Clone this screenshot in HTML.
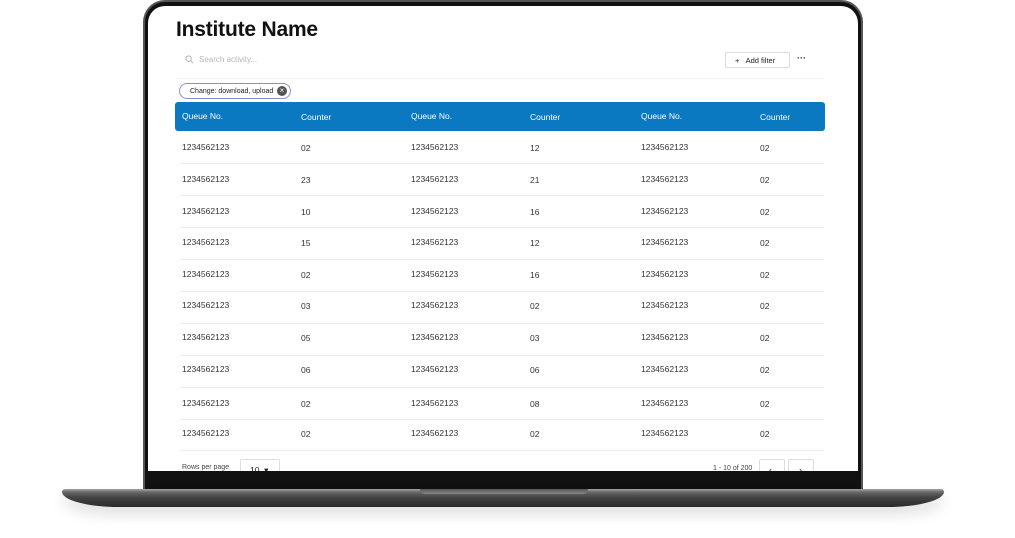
<!DOCTYPE html>
<html><head><meta charset="utf-8"><style>
*{margin:0;padding:0;box-sizing:border-box}
body{width:1015px;height:538px;background:#fff;position:relative;overflow:hidden;font-family:"Liberation Sans",sans-serif;color:#222}
.bezel{position:absolute;left:143px;top:0;width:720px;height:492px;background:#111;border-radius:22px 22px 0 0;border:2px solid #555;border-bottom:none}
.screen{position:absolute;left:148px;top:6px;width:710px;height:465px;background:#fff;border-radius:17px 17px 0 0;overflow:hidden}
.base{position:absolute;left:62px;top:489px;width:882px;height:18px;background:linear-gradient(#a5a5a5 0,#6a6a6a 3px,#444 8px,#2a2a2a 100%);border-radius:3px 3px 60px 60px/3px 3px 16px 16px;box-shadow:0 8px 14px rgba(0,0,0,.12)}
.notch{position:absolute;left:420px;top:489px;width:168px;height:5px;background:linear-gradient(#555,#888);border-radius:0 0 6px 6px}
.t{position:absolute;white-space:nowrap}
h1{position:absolute;left:28px;top:12px;font-size:21px;font-weight:bold;color:#111;letter-spacing:-.2px}
.hdr{position:absolute;left:27px;top:96px;width:650px;height:29px;background:#0b78c2;border-radius:3px}
.cell{position:absolute;font-size:8.5px;color:#333}
.hcell{position:absolute;font-size:8.5px;color:#fff}
.line{position:absolute;left:32px;width:644px;height:1px;background:#ececec}
</style></head><body>
<div class="bezel"></div>
<div class="screen">
<h1>Institute Name</h1>
<svg class="t" style="left:37px;top:49px" width="9" height="9" viewBox="0 0 10 10"><circle cx="4" cy="4" r="3" fill="none" stroke="#bbb" stroke-width="1.2"/><path d="M6.3 6.3 9 9" stroke="#bbb" stroke-width="1.2"/></svg>
<div class="t" style="left:51px;top:49px;font-size:8px;color:#b8b8b8">Search activity...</div>
<div class="t" style="left:577px;top:46px;width:65px;height:16px;border:1px solid #ddd;border-radius:2px;font-size:7.5px;color:#222;padding:3px 0 0 9px">+&nbsp;&nbsp;&nbsp;Add filter</div>
<div class="t" style="left:649px;top:47px;font-size:9px;font-weight:bold;color:#333">···</div>
<div class="line" style="top:72px;left:28px;width:648px;background:#f1f1f1"></div>
<div class="t" style="left:31px;top:77px;width:112px;height:16px;border:1px solid #8a8fd0;border-radius:9px;font-size:7px;color:#222;padding:4px 0 0 10px">Change: download, upload</div>
<div class="t" style="left:129px;top:80px;width:10px;height:10px;border-radius:50%;background:#555;color:#fff;font-size:8px;line-height:10px;text-align:center">×</div>
<div class="hdr"></div>
<div class="hcell" style="left:34px;top:105px">Queue No.</div>
<div class="hcell" style="left:153px;top:106px">Counter</div>
<div class="hcell" style="left:263px;top:105px">Queue No.</div>
<div class="hcell" style="left:382px;top:106px">Counter</div>
<div class="hcell" style="left:493px;top:105px">Queue No.</div>
<div class="hcell" style="left:612px;top:106px">Counter</div>
<div id="rows"></div>
<div class="t" style="left:34px;top:458px;font-size:7px;color:#444">Rows per page</div>
<div class="t" style="left:92px;top:453px;width:40px;height:18px;border:1px solid #ddd;border-radius:2px;font-size:8.5px;padding:5px 0 0 9px">10 &nbsp;▾</div>
<div class="t" style="left:565px;top:459px;font-size:7px;color:#444">1 - 10 of 200</div>
<div class="t" style="left:611px;top:453px;width:26px;height:18px;border:1px solid #ddd;border-radius:2px;font-size:9px;padding:5px 0 0 9px">‹</div>
<div class="t" style="left:640px;top:453px;width:26px;height:18px;border:1px solid #ddd;border-radius:2px;font-size:9px;padding:5px 0 0 10px">›</div>
</div>
<div class="base"></div>
<div class="notch"></div>
<script>
var d=[["02","12","02"],["23","21","02"],["10","16","02"],["15","12","02"],["02","16","02"],["03","02","02"],["05","03","02"],["06","06","02"],["02","08","02"],["02","02","02"]];
var ys=[136,168,200,231,263,294,326,358,392,422];
var ls=[157,189,221,253,285,317,349,381,413,444];
var h="";
for(var i=0;i<10;i++){var y=ys[i];
h+='<div class="cell" style="left:34px;top:'+y+'px">1234562123</div>';
h+='<div class="cell" style="left:153px;top:'+(y+1)+'px">'+d[i][0]+'</div>';
h+='<div class="cell" style="left:263px;top:'+y+'px">1234562123</div>';
h+='<div class="cell" style="left:382px;top:'+(y+1)+'px">'+d[i][1]+'</div>';
h+='<div class="cell" style="left:493px;top:'+y+'px">1234562123</div>';
h+='<div class="cell" style="left:612px;top:'+(y+1)+'px">'+d[i][2]+'</div>';
h+='<div class="line" style="top:'+ls[i]+'px"></div>';}
document.getElementById("rows").innerHTML=h;
</script>
</body></html>
